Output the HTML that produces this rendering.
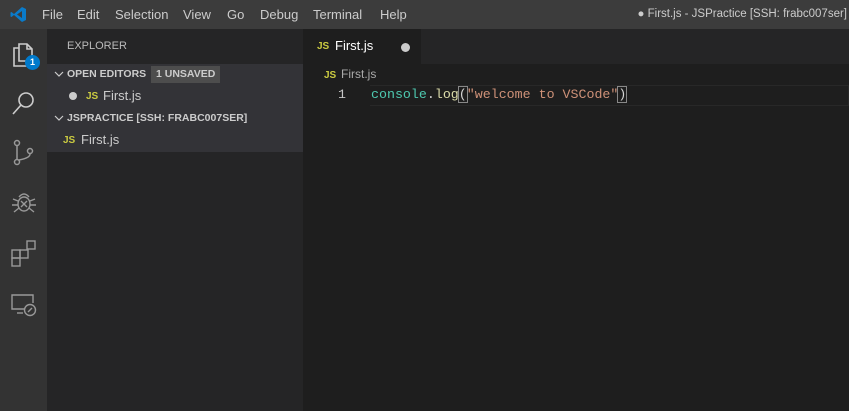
<!DOCTYPE html>
<html><head><style>
*{margin:0;padding:0;box-sizing:border-box}
body{width:849px;height:411px;overflow:hidden;background:#1e1e1e;font-family:"Segoe UI","Liberation Sans",sans-serif;font-size:13px;color:#ccc;position:relative}
.abs{position:absolute;white-space:nowrap}
#title{left:0;top:0;width:849px;height:29px;background:#3c3c3c}
#title span{position:absolute;top:7px;font-size:13px;color:#ccc;white-space:nowrap}
#act{left:0;top:29px;width:47px;height:382px;background:#333}
#side{left:47px;top:29px;width:256px;height:382px;background:#252526}
#tabs{left:303px;top:29px;width:546px;height:35px;background:#252526}
#tab{left:303px;top:29px;width:118px;height:35px;background:#1e1e1e}
.js{color:#cbcb41;font-weight:bold;font-size:10px}
.mono{font-family:"Liberation Mono",monospace;font-size:13.3px}
</style></head><body>
<div id="title" class="abs">
<svg class="abs" style="left:10px;top:6px" width="17" height="17" viewBox="0 0 17 17"><path d="M12 1 L16 3 V14 L12 16 L4 9 L1.5 11 L0.5 10.5 V6.5 L1.5 6 L4 8 Z M12 5 L7 8.5 L12 12 Z" fill="#0a7bca"/></svg>
<span style="left:42px">File</span><span style="left:77px">Edit</span><span style="left:115px">Selection</span><span style="left:183px">View</span><span style="left:227px">Go</span><span style="left:260px">Debug</span><span style="left:313px">Terminal</span><span style="left:380px">Help</span>
<span style="right:2px;font-size:11.5px;top:8px">● First.js - JSPractice [SSH: frabc007ser]</span>
</div>
<div id="act" class="abs">
<svg class="abs" style="left:11px;top:11px" width="26" height="28" viewBox="0 0 26 28" fill="none" stroke="#ccc" stroke-width="1.6"><path d="M8 4 H16 L21 9 V21 H8 Z"/><path d="M16 4 V9 H21"/><path d="M8 8 H3 V26 H16 V21"/></svg>
<div class="abs" style="left:25px;top:26px;width:15px;height:15px;border-radius:50%;background:#007acc;color:#fff;font-size:9px;font-weight:bold;text-align:center;line-height:15px">1</div>
<svg class="abs" style="left:11px;top:60px" width="26" height="28" viewBox="0 0 26 28" fill="none" stroke="#ccc" stroke-width="1.6"><circle cx="15" cy="11" r="7"/><path d="M10 16 L2 25"/></svg>
<svg class="abs" style="left:11px;top:110px" width="26" height="28" viewBox="0 0 26 28" fill="none" stroke="#999" stroke-width="1.5"><circle cx="6" cy="4" r="2.5"/><circle cx="6" cy="23" r="2.5"/><circle cx="19" cy="12" r="2.5"/><path d="M6 7 V20 M19 15 Q19 19 8 21"/></svg>
<svg class="abs" style="left:11px;top:160px" width="26" height="28" viewBox="0 0 26 28" fill="none" stroke="#999" stroke-width="1.4"><path d="M8 8 Q13 2 18 8"/><ellipse cx="13" cy="15" rx="6" ry="7"/><path d="M10 12 L16 18 M16 12 L10 18 M2 10 L7 12 M24 10 L19 12 M1 16 H7 M25 16 H19 M3 23 L8 19 M23 23 L18 19"/></svg>
<svg class="abs" style="left:11px;top:211px" width="26" height="28" viewBox="0 0 26 28" fill="none" stroke="#999" stroke-width="1.4"><rect x="1" y="10" width="8" height="8"/><rect x="9" y="10" width="8" height="8"/><rect x="1" y="18" width="8" height="8"/><rect x="16" y="1" width="8" height="8"/></svg>
<svg class="abs" style="left:11px;top:262px" width="26" height="28" viewBox="0 0 26 28" fill="none" stroke="#999" stroke-width="1.4"><path d="M14 18 H1 V4 H22 V12"/><path d="M6 22 H12"/><circle cx="19" cy="19" r="5.5"/><path d="M17 21 L21 17"/></svg>
</div>
<div id="side" class="abs">
<div class="abs" style="left:20px;top:11px;font-size:11px;color:#bbb">EXPLORER</div>
<div class="abs" style="left:0;top:35px;width:256px;height:88px;background:#333337"></div>
<svg class="abs" style="left:7px;top:41px" width="10" height="8" viewBox="0 0 10 8" fill="none" stroke="#ccc" stroke-width="1.2"><path d="M1 2 L5 6 L9 2"/></svg>
<div class="abs" style="left:20px;top:39px;font-size:10.5px;font-weight:bold;color:#ccc">OPEN EDITORS</div>
<div class="abs" style="left:104px;top:37px;width:69px;height:17px;background:#4d4d4d;font-size:10.5px;font-weight:bold;color:#ccc;padding-left:5px;line-height:17px">1 UNSAVED</div>
<div class="abs" style="left:22px;top:63px;width:8px;height:8px;border-radius:50%;background:#ccc"></div>
<div class="abs js" style="left:39px;top:62px">JS</div>
<div class="abs" style="left:56px;top:59px;color:#ccc">First.js</div>
<svg class="abs" style="left:7px;top:85px" width="10" height="8" viewBox="0 0 10 8" fill="none" stroke="#ccc" stroke-width="1.2"><path d="M1 2 L5 6 L9 2"/></svg>
<div class="abs" style="left:20px;top:83px;font-size:10.5px;font-weight:bold;color:#ccc">JSPRACTICE [SSH: FRABC007SER]</div>
<div class="abs js" style="left:16px;top:106px">JS</div>
<div class="abs" style="left:34px;top:103px;color:#ccc">First.js</div>
</div>
<div id="tabs" class="abs"></div>
<div id="tab" class="abs">
<div class="abs js" style="left:14px;top:12px">JS</div>
<div class="abs" style="left:32px;top:9px;color:#fff">First.js</div>
<div class="abs" style="left:98px;top:14px;width:9px;height:9px;border-radius:50%;background:#ccc"></div>
</div>
<div class="abs js" style="left:324px;top:70px">JS</div>
<div class="abs" style="left:341px;top:67px;color:#aaa;font-size:12px">First.js</div>
<div class="abs" style="left:370px;top:85px;width:479px;height:21px;border:1px solid #282828;border-left:none"></div>
<div class="abs mono" style="left:338px;top:87px;color:#c6c6c6">1</div>
<div class="abs mono" style="left:371px;top:87px;white-space:pre"><span style="color:#4ec9b0">console</span><span style="color:#d4d4d4">.</span><span style="color:#dcdcaa">log</span><span style="color:#d4d4d4;outline:1px solid #888">(</span><span style="color:#ce9178">"welcome to VSCode"</span><span style="color:#d4d4d4;outline:1px solid #888">)</span></div>
</body></html>
